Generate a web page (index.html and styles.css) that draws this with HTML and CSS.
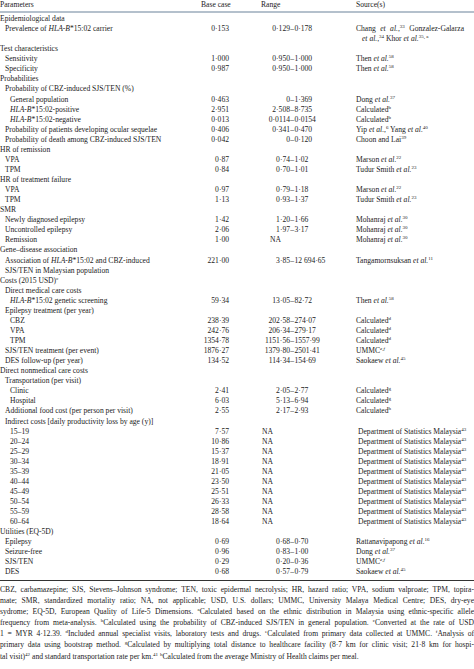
FILE: index.html
```html
<!DOCTYPE html>
<html>
<head>
<meta charset="utf-8">
<link rel="stylesheet" href="styles.css">
</head>
<body>
<div class="page">
  <div class="row head">
    <span class="p">Parameters</span><span class="hb">Base case</span><span class="hr">Range</span><span class="s">Source(s)</span>
  </div>
  <div class="body">
    <div class="row"><span class="p">Epidemiological data</span></div>
    <div class="row"><span class="p l1">Prevalence of <i>HLA-B</i>*15:02 carrier</span><span class="b">0·153</span><span class="rg"><span class="lo">0·129</span><span class="d">–</span><span class="hi">0·178</span></span><span class="s j">Chang <i>et al.</i>,<sup>33</sup> Gonzalez-Galarza</span></div>
    <div class="row"><span class="p"></span><span class="b"></span><span class="rg"></span><span class="s ind"><i>et al.</i>,<sup>34</sup> Khor <i>et al.</i><sup>35, a</sup></span></div>
    <div class="row"><span class="p">Test characteristics</span></div>
    <div class="row"><span class="p l1">Sensitivity</span><span class="b">1·000</span><span class="rg"><span class="lo">0·950</span><span class="d">–</span><span class="hi">1·000</span></span><span class="s">Then <i>et al.</i><sup>58</sup></span></div>
    <div class="row"><span class="p l1">Specificity</span><span class="b">0·987</span><span class="rg"><span class="lo">0·950</span><span class="d">–</span><span class="hi">1·000</span></span><span class="s">Then <i>et al.</i><sup>58</sup></span></div>
    <div class="row"><span class="p">Probabilities</span></div>
    <div class="row"><span class="p l1">Probability of CBZ-induced SJS/TEN (%)</span></div>
    <div class="row"><span class="p l2">General population</span><span class="b">0·463</span><span class="rg"><span class="lo">0</span><span class="d">–</span><span class="hi">1·369</span></span><span class="s">Dong <i>et al.</i><sup>37</sup></span></div>
    <div class="row"><span class="p l2"><i>HLA-B</i>*15:02-positive</span><span class="b">2·951</span><span class="rg"><span class="lo">2·508</span><span class="d">–</span><span class="hi">8·735</span></span><span class="s">Calculated<sup>b</sup></span></div>
    <div class="row"><span class="p l2"><i>HLA-B</i>*15:02-negative</span><span class="b">0·013</span><span class="rg"><span class="lo">0·0114</span><span class="d">–</span><span class="hi">0·0154</span></span><span class="s">Calculated<sup>b</sup></span></div>
    <div class="row"><span class="p l1">Probability of patients developing ocular sequelae</span><span class="b">0·406</span><span class="rg"><span class="lo">0·341</span><span class="d">–</span><span class="hi">0·470</span></span><span class="s">Yip <i>et al.</i>,<sup>6</sup> Yang <i>et al.</i><sup>40</sup></span></div>
    <div class="row"><span class="p l1">Probability of death among CBZ-induced SJS/TEN</span><span class="b">0·042</span><span class="rg"><span class="lo">0</span><span class="d">–</span><span class="hi">0·120</span></span><span class="s">Choon and Lai<sup>39</sup></span></div>
    <div class="row"><span class="p">HR of remission</span></div>
    <div class="row"><span class="p l1">VPA</span><span class="b">0·87</span><span class="rg"><span class="lo">0·74</span><span class="d">–</span><span class="hi">1·02</span></span><span class="s">Marson <i>et al.</i><sup>22</sup></span></div>
    <div class="row"><span class="p l1">TPM</span><span class="b">0·84</span><span class="rg"><span class="lo">0·70</span><span class="d">–</span><span class="hi">1·01</span></span><span class="s">Tudur Smith <i>et al.</i><sup>23</sup></span></div>
    <div class="row"><span class="p">HR of treatment failure</span></div>
    <div class="row"><span class="p l1">VPA</span><span class="b">0·97</span><span class="rg"><span class="lo">0·79</span><span class="d">–</span><span class="hi">1·18</span></span><span class="s">Marson <i>et al.</i><sup>22</sup></span></div>
    <div class="row"><span class="p l1">TPM</span><span class="b">1·13</span><span class="rg"><span class="lo">0·93</span><span class="d">–</span><span class="hi">1·37</span></span><span class="s">Tudur Smith <i>et al.</i><sup>23</sup></span></div>
    <div class="row"><span class="p">SMR</span></div>
    <div class="row"><span class="p l1">Newly diagnosed epilepsy</span><span class="b">1·42</span><span class="rg"><span class="lo">1·20</span><span class="d">–</span><span class="hi">1·66</span></span><span class="s">Mohanraj <i>et al.</i><sup>30</sup></span></div>
    <div class="row"><span class="p l1">Uncontrolled epilepsy</span><span class="b">2·06</span><span class="rg"><span class="lo">1·97</span><span class="d">–</span><span class="hi">3·17</span></span><span class="s">Mohanraj <i>et al.</i><sup>30</sup></span></div>
    <div class="row"><span class="p l1">Remission</span><span class="b">1·00</span><span class="rg"><span class="na na2">NA</span></span><span class="s">Mohanraj <i>et al.</i><sup>30</sup></span></div>
    <div class="row"><span class="p">Gene–disease association</span></div>
    <div class="row"><span class="p l1">Association of <i>HLA-B</i>*15:02 and CBZ-induced</span><span class="b">221·00</span><span class="rg"><span class="lo">3·85</span><span class="d">–</span><span class="hi">12 694·65</span></span><span class="s">Tangamornsuksan <i>et al.</i><sup>11</sup></span></div>
    <div class="row"><span class="p l1">SJS/TEN in Malaysian population</span></div>
    <div class="row"><span class="p">Costs (2015 USD)<sup>c</sup></span></div>
    <div class="row"><span class="p l1">Direct medical care costs</span></div>
    <div class="row"><span class="p l2"><i>HLA-B</i>*15:02 genetic screening</span><span class="b">59·34</span><span class="rg"><span class="lo">13·05</span><span class="d">–</span><span class="hi">82·72</span></span><span class="s">Then <i>et al.</i><sup>58</sup></span></div>
    <div class="row"><span class="p l1">Epilepsy treatment (per year)</span></div>
    <div class="row"><span class="p l2">CBZ</span><span class="b">238·39</span><span class="rg"><span class="lo">202·58</span><span class="d">–</span><span class="hi">274·07</span></span><span class="s">Calculated<sup>d</sup></span></div>
    <div class="row"><span class="p l2">VPA</span><span class="b">242·76</span><span class="rg"><span class="lo">206·34</span><span class="d">–</span><span class="hi">279·17</span></span><span class="s">Calculated<sup>d</sup></span></div>
    <div class="row"><span class="p l2">TPM</span><span class="b">1354·78</span><span class="rg"><span class="lo">1151·56</span><span class="d">–</span><span class="hi">1557·99</span></span><span class="s">Calculated<sup>d</sup></span></div>
    <div class="row"><span class="p l1">SJS/TEN treatment (per event)</span><span class="b">1876·27</span><span class="rg"><span class="lo">1379·80</span><span class="d">–</span><span class="hi">2501·41</span></span><span class="s">UMMC<sup><i>e,f</i></sup></span></div>
    <div class="row"><span class="p l1">DES follow-up (per year)</span><span class="b">134·52</span><span class="rg"><span class="lo">114·34</span><span class="d">–</span><span class="hi">154·69</span></span><span class="s">Saokaew <i>et al.</i><sup>45</sup></span></div>
    <div class="row"><span class="p">Direct nonmedical care costs</span></div>
    <div class="row"><span class="p l1">Transportation (per visit)</span></div>
    <div class="row"><span class="p l2">Clinic</span><span class="b">2·41</span><span class="rg"><span class="lo">2·05</span><span class="d">–</span><span class="hi">2·77</span></span><span class="s">Calculated<sup>g</sup></span></div>
    <div class="row"><span class="p l2">Hospital</span><span class="b">6·03</span><span class="rg"><span class="lo">5·13</span><span class="d">–</span><span class="hi">6·94</span></span><span class="s">Calculated<sup>g</sup></span></div>
    <div class="row"><span class="p l1">Additional food cost (per person per visit)</span><span class="b">2·55</span><span class="rg"><span class="lo">2·17</span><span class="d">–</span><span class="hi">2·93</span></span><span class="s">Calculated<sup>h</sup></span></div>
    <div class="row"><span class="p l1">Indirect costs [daily productivity loss by age (y)]</span></div>
    <div class="row"><span class="p l2">15–19</span><span class="b">7·57</span><span class="rg"><span class="na">NA</span></span><span class="s ds">Department of Statistics Malaysia<sup>43</sup></span></div>
    <div class="row"><span class="p l2">20–24</span><span class="b">10·86</span><span class="rg"><span class="na">NA</span></span><span class="s ds">Department of Statistics Malaysia<sup>43</sup></span></div>
    <div class="row"><span class="p l2">25–29</span><span class="b">15·37</span><span class="rg"><span class="na">NA</span></span><span class="s ds">Department of Statistics Malaysia<sup>43</sup></span></div>
    <div class="row"><span class="p l2">30–34</span><span class="b">18·91</span><span class="rg"><span class="na">NA</span></span><span class="s ds">Department of Statistics Malaysia<sup>43</sup></span></div>
    <div class="row"><span class="p l2">35–39</span><span class="b">21·05</span><span class="rg"><span class="na">NA</span></span><span class="s ds">Department of Statistics Malaysia<sup>43</sup></span></div>
    <div class="row"><span class="p l2">40–44</span><span class="b">23·50</span><span class="rg"><span class="na">NA</span></span><span class="s ds">Department of Statistics Malaysia<sup>43</sup></span></div>
    <div class="row"><span class="p l2">45–49</span><span class="b">25·51</span><span class="rg"><span class="na">NA</span></span><span class="s ds">Department of Statistics Malaysia<sup>43</sup></span></div>
    <div class="row"><span class="p l2">50–54</span><span class="b">26·33</span><span class="rg"><span class="na">NA</span></span><span class="s ds">Department of Statistics Malaysia<sup>43</sup></span></div>
    <div class="row"><span class="p l2">55–59</span><span class="b">28·58</span><span class="rg"><span class="na">NA</span></span><span class="s ds">Department of Statistics Malaysia<sup>43</sup></span></div>
    <div class="row"><span class="p l2">60–64</span><span class="b">18·64</span><span class="rg"><span class="na">NA</span></span><span class="s ds">Department of Statistics Malaysia<sup>43</sup></span></div>
    <div class="row"><span class="p">Utilities (EQ-5D)</span></div>
    <div class="row"><span class="p l1">Epilepsy</span><span class="b">0·69</span><span class="rg"><span class="lo">0·68</span><span class="d">–</span><span class="hi">0·70</span></span><span class="s">Rattanavipapong <i>et al.</i><sup>16</sup></span></div>
    <div class="row"><span class="p l1">Seizure-free</span><span class="b">0·96</span><span class="rg"><span class="lo">0·83</span><span class="d">–</span><span class="hi">1·00</span></span><span class="s">Dong <i>et al.</i><sup>37</sup></span></div>
    <div class="row"><span class="p l1">SJS/TEN</span><span class="b">0·29</span><span class="rg"><span class="lo">0·20</span><span class="d">–</span><span class="hi">0·36</span></span><span class="s">UMMC<sup><i>e,f</i></sup></span></div>
    <div class="row"><span class="p l1">DES</span><span class="b">0·68</span><span class="rg"><span class="lo">0·57</span><span class="d">–</span><span class="hi">0·79</span></span><span class="s">Saokaew <i>et al.</i><sup>45</sup></span></div>
  </div>
  <div class="notes">
    <div class="ln">CBZ, carbamazepine; SJS, Stevens–Johnson syndrome; TEN, toxic epidermal necrolysis; HR, hazard ratio; VPA, sodium valproate; TPM, topira-</div>
    <div class="ln">mate; SMR, standardized mortality ratio; NA, not applicable; USD, U.S. dollars; UMMC, University Malaya Medical Centre; DES, dry-eye</div>
    <div class="ln">sydrome; EQ-5D, European Quality of Life-5 Dimensions. <sup>a</sup>Calculated based on the ethnic distribution in Malaysia using ethnic-specific allele</div>
    <div class="ln">frequency from meta-analysis. <sup>b</sup>Calculated using the probability of CBZ-induced SJS/TEN in general population. <sup>c</sup>Converted at the rate of USD</div>
    <div class="ln">1 = MYR 4·12.39. <sup>d</sup>Included annual specialist visits, laboratory tests and drugs. <sup>e</sup>Calculated from primary data collected at UMMC. <sup>f</sup>Analysis of</div>
    <div class="ln">primary data using bootstrap method. <sup>g</sup>Calculated by multiplying total distance to healthcare facility (8·7 km for clinic visit; 21·8 km for hospi-</div>
    <div class="ln last">tal visit)<sup>42</sup> and standard transportation rate per km.<sup>41</sup> <sup>h</sup>Calculated from the average Ministry of Health claims per meal.</div>
  </div>
</div>
</body>
</html>
```

FILE: styles.css
```css
html, body {
  margin: 0;
  padding: 0;
  background: #ffffff;
}
.page {
  width: 474px;
  height: 669px;
  overflow: hidden;
  font-family: "Liberation Serif", "Times New Roman", serif;
  font-size: 7.6px;
  color: #222222;
}
.row {
  display: grid;
  grid-template-columns: 200px 30px 126px 118px;
  height: 10.07px;
  line-height: 10.07px;
  white-space: nowrap;
}
.head {
  height: 11px;
  line-height: 10px;
  border-bottom: 2px solid #b4c0cc;
}
.body {
  padding-top: 1px;
}
.p { padding-left: 0; }
.l1 { padding-left: 5px; }
.l2 { padding-left: 10px; }
.b { text-align: right; padding-right: 1px; }
.hb { padding-left: 1px; overflow: visible; }
.hr { padding-left: 31px; }
.rg {
  display: grid;
  grid-template-columns: 60px auto 1fr;
}
.lo { text-align: right; }
.d { padding: 0 0.3px; }
.hi { text-align: left; }
.na { grid-column: 1 / 4; padding-left: 32px; }
.na2 { padding-left: 40px; }
.s { padding-left: 0; }
.ds { padding-left: 2px; }
.j {
  width: 108px;
  text-align: justify;
  text-align-last: justify;
}
.ind { padding-left: 6px; }
sup {
  font-size: 5px;
  line-height: 0;
  vertical-align: 3px;
}
.notes {
  border-top: 1.5px solid #333333;
  margin-top: 2px;
  padding-top: 3px;
}
.ln {
  height: 11.2px;
  line-height: 11.2px;
  white-space: nowrap;
  text-align: justify;
  text-align-last: justify;
  white-space: normal;
  overflow: hidden;
}
.ln.last {
  text-align-last: left;
}
```
